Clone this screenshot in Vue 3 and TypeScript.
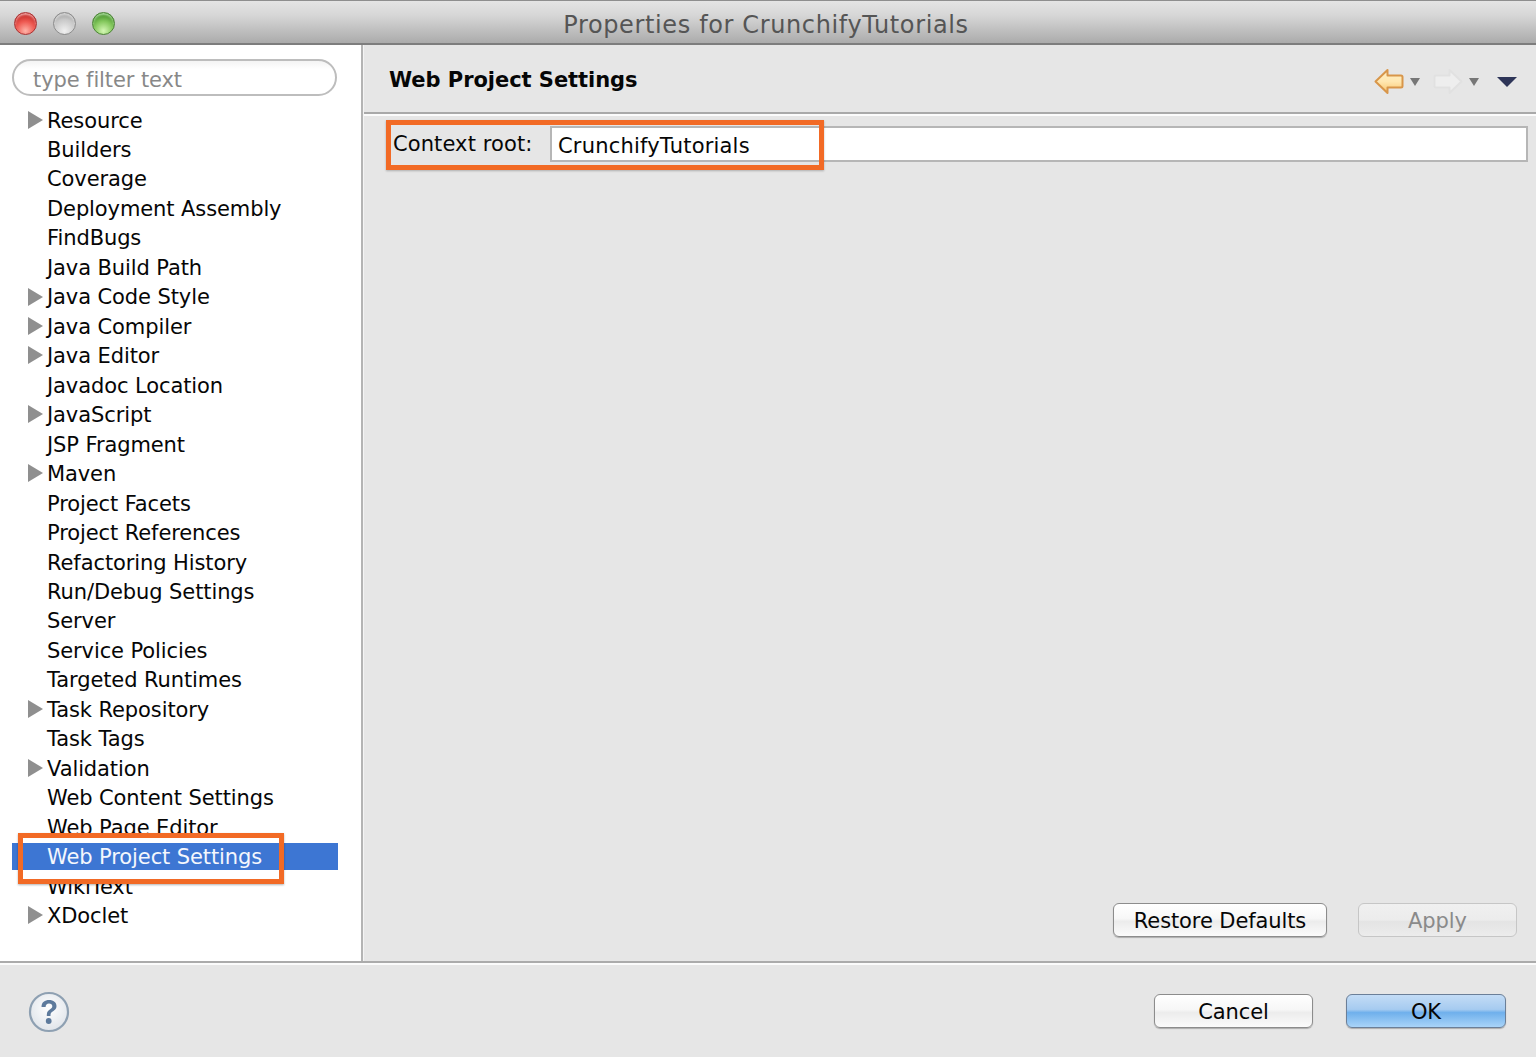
<script setup lang="ts">
interface Item { label: string; arrow?: boolean }
const items: Item[] = [
  { label: 'Resource', arrow: true }, { label: 'Builders' }, { label: 'Coverage' },
  { label: 'Deployment Assembly' }, { label: 'FindBugs' }, { label: 'Java Build Path' },
  { label: 'Java Code Style', arrow: true }, { label: 'Java Compiler', arrow: true },
  { label: 'Java Editor', arrow: true }, { label: 'Javadoc Location' },
  { label: 'JavaScript', arrow: true }, { label: 'JSP Fragment' }, { label: 'Maven', arrow: true },
  { label: 'Project Facets' }, { label: 'Project References' }, { label: 'Refactoring History' },
  { label: 'Run/Debug Settings' }, { label: 'Server' }, { label: 'Service Policies' },
  { label: 'Targeted Runtimes' }, { label: 'Task Repository', arrow: true }, { label: 'Task Tags' },
  { label: 'Validation', arrow: true }, { label: 'Web Content Settings' }, { label: 'Web Page Editor' },
  { label: 'Web Project Settings' }, { label: 'WikiText' }, { label: 'XDoclet', arrow: true }
]
const selected = 'Web Project Settings'
</script>

<template>
  <div class="window">
    <header class="titlebar">
      <div class="lights">
        <span class="light red"></span>
        <span class="light grey"></span>
        <span class="light green"></span>
      </div>
      <div class="title">Properties for CrunchifyTutorials</div>
    </header>

    <div class="main">
      <aside class="side">
        <div class="filter">type filter text</div>
        <ul class="tree">
          <li v-for="it in items" :key="it.label" class="row" :class="{ sel: it.label === selected }">
            <template v-if="it.label === selected">
              <span class="mask"></span>
              <span class="bar"></span>
              <span class="mark"></span>
            </template>
            <span class="twisty"><i v-if="it.arrow" class="tri"></i></span>
            <span class="lbl">{{ it.label }}</span>
          </li>
        </ul>
      </aside>

      <section class="content">
        <div class="head">
          <h1>Web Project Settings</h1>
          <div class="nav">
            <svg class="arr" width="30" height="27" viewBox="0 0 30 27">
              <defs>
                <linearGradient id="ag" x1="0" y1="0" x2="0" y2="1">
                  <stop offset="0" stop-color="#fff1c8" />
                  <stop offset=".5" stop-color="#ffe7b0" />
                  <stop offset="1" stop-color="#f8c56c" />
                </linearGradient>
              </defs>
              <path d="M1.500 13.500 L13.500 2 V7.500 H27 Q28.500 7.500 28.500 9 V18 Q28.500 19.500 27 19.500 H13.500 V25 Z" fill="url(#ag)" stroke="#d8964a" stroke-width="2" stroke-linejoin="round" />
            </svg>
            <i class="drop"></i>
            <svg class="arr fwd" width="30" height="27" viewBox="0 0 30 27">
              <path d="M28.500 13.500 L16.500 2 V7.500 H3 Q1.500 7.500 1.500 9 V18 Q1.500 19.500 3 19.500 H16.500 V25 Z" fill="#eeeeee" stroke="#e1e1e1" stroke-width="2" stroke-linejoin="round" />
            </svg>
            <i class="drop"></i>
            <i class="menu"></i>
          </div>
        </div>
        <div class="rule"></div>

        <div class="field">
          <label>Context root:</label>
          <div class="input">CrunchifyTutorials</div>
          <span class="mark2"></span>
        </div>

        <div class="spacer"></div>

        <div class="actions">
          <button class="btn restore">Restore Defaults</button>
          <button class="btn apply" disabled>Apply</button>
        </div>
      </section>
    </div>

    <footer class="foot">
      <svg class="help" width="44" height="44" viewBox="0 0 44 44">
        <defs>
          <radialGradient id="hg" cx=".5" cy=".4" r=".65">
            <stop offset="0" stop-color="#ffffff" />
            <stop offset="1" stop-color="#dde2e8" />
          </radialGradient>
        </defs>
        <circle cx="22" cy="22" r="19" fill="url(#hg)" stroke="#8ea0b2" stroke-width="2.200" />
        <path d="M14.500 17 C14.500 12 18 10 22 10 C26.500 10 29.500 12.500 29.500 16 C29.500 19.500 27 20.500 25 22 C23.500 23 23.500 24 23.500 26 H19.800 C19.800 23 20 21.500 22.500 19.800 C24.500 18.500 25.300 17.800 25.300 16.300 C25.300 14.700 24 13.600 22 13.600 C19.800 13.600 18.700 15 18.600 17 Z" fill="#5d7a9c" />
        <circle cx="21.700" cy="31" r="2.900" fill="#5d7a9c" />
      </svg>
      <div class="foot-btns">
        <button class="btn cancel">Cancel</button>
        <button class="btn ok">OK</button>
      </div>
    </footer>
  </div>
</template>

<style>
html, body { margin: 0; background: #e6e6e6; }
</style>

<style scoped>
.window {
  width: 1536px;
  height: 1057px;
  display: flex;
  flex-direction: column;
  overflow: hidden;
  background: #e6e6e6;
  font-family: "DejaVu Sans", "Liberation Sans", sans-serif;
  font-size: 21px;
  letter-spacing: -0.1px;
  color: #060606;
}
.titlebar {
  height: 45px;
  box-sizing: border-box;
  flex: none;
  position: relative;
  display: flex;
  align-items: center;
  justify-content: center;
  background: linear-gradient(#e4e4e4, #d6d6d6 35%, #ababab);
  border-top: 1px solid #8e8e8e;
  border-bottom: 2px solid #7d7d7d;
}
.lights {
  position: absolute;
  left: 14px;
  top: 11px;
  display: flex;
  gap: 16px;
}
.light {
  width: 23px;
  height: 23px;
  border-radius: 50%;
  box-sizing: border-box;
  border: 1px solid #777;
}
.red { background: radial-gradient(circle at 50% 85%, #ffb3a8, #ee5a52 45%, #c9302c 75%, #e88); border-color: #a33; box-shadow: inset 0 2px 2px rgba(255,220,220,.55); }
.grey { background: radial-gradient(circle at 50% 85%, #f0f0f0, #c8c8c8 55%, #a6a6a6 80%, #ccc); border-color: #8c8c8c; box-shadow: inset 0 2px 2px rgba(255,255,255,.5); }
.green { background: radial-gradient(circle at 50% 85%, #d5f7b5, #86c95f 45%, #4f9a33 75%, #8c8); border-color: #4c8436; box-shadow: inset 0 2px 2px rgba(225,255,215,.5); }
.title {
  font-size: 24px;
  color: #555;
  letter-spacing: 0.63px;
  margin-top: 5px;
  margin-left: -4px;
}
.main {
  flex: none;
  height: 916px;
  display: flex;
  border-bottom: 2px solid #ababab;
  box-sizing: content-box;
}
.side {
  width: 361px;
  flex: none;
  background: #fff;
  border-right: 2px solid #b4b4b4;
  box-sizing: content-box;
}
.filter {
  margin: 14px 0 0 12px;
  width: 325px;
  height: 37px;
  box-sizing: border-box;
  border: 2px solid #bdbdbd;
  border-radius: 19px;
  padding-left: 19px;
  line-height: 38px;
  color: #888;
  background: linear-gradient(#f4f4f4, #fff 25%);
}
.tree {
  list-style: none;
  margin: 10.5px 0 0;
  padding: 0;
}
.row {
  height: 29.48px;
  line-height: 29.48px;
  display: flex;
  align-items: center;
  white-space: nowrap;
  position: relative;
}
.twisty {
  width: 47px;
  height: 100%;
  flex: none;
  display: flex;
  align-items: center;
  padding-left: 28px;
  box-sizing: border-box;
}
.tri {
  width: 0;
  height: 0;
  border-left: 15px solid #8f8f8f;
  border-top: 9px solid transparent;
  border-bottom: 9px solid transparent;
  margin-top: -3px;
}
.lbl { position: relative; }
.row.sel { z-index: 2; }
.row.sel .lbl { color: #f4f7fd; }
.mask {
  position: absolute;
  left: 18px;
  width: 265px;
  top: -10px;
  height: 51px;
  background: #fff;
}
.bar {
  position: absolute;
  left: 12px;
  width: 326px;
  top: 0;
  height: 27px;
  background: #3d76d3;
}
.mark {
  position: absolute;
  left: 18px;
  width: 266px;
  top: -10px;
  height: 51px;
  box-sizing: border-box;
  border: 5px solid #f26a25;
  box-shadow: 0 1px 2px rgba(0,0,0,.3);
  z-index: 3;
}
.content {
  flex: 1;
  min-width: 0;
  display: flex;
  flex-direction: column;
  border-left: 1px solid #f4f4f4;
  background: #e6e6e6;
}
.head {
  height: 67px;
  flex: none;
  display: flex;
  align-items: center;
  justify-content: space-between;
  padding: 0 19px 0 25px;
}
.head h1 {
  margin: 3px 0 0;
  font-size: 21px;
  font-weight: 700;
  letter-spacing: -0.05px;
  color: #060606;
}
.nav {
  display: flex;
  align-items: center;
  margin-top: 5px;
}
.drop {
  width: 0;
  height: 0;
  border-top: 8px solid #777;
  border-left: 5px solid transparent;
  border-right: 5px solid transparent;
  margin: 2px 0 0 6px;
}
.fwd { margin-left: 13px; }
.menu {
  width: 0;
  height: 0;
  border-top: 10px solid #2e3558;
  border-left: 10px solid transparent;
  border-right: 10px solid transparent;
  margin: 2px 0 0 18px;
}
.rule {
  height: 2px;
  background: #a9a9a9;
  border-bottom: 2px solid #fbfbfb;
  flex: none;
}
.field {
  position: relative;
  margin: 10px 8px 0 29px;
  height: 36px;
  display: flex;
  align-items: center;
  flex: none;
}
.field label {
  width: 157px;
  flex: none;
  letter-spacing: 0.1px;
}
.input {
  flex: 1;
  height: 100%;
  box-sizing: border-box;
  background: #fff;
  border: 2px solid #b6b6b6;
  padding: 1px 0 0 6px;
  line-height: 34px;
  letter-spacing: 0.2px;
}
.mark2 {
  position: absolute;
  left: -7px;
  top: -6px;
  width: 438px;
  height: 50px;
  box-sizing: border-box;
  border: 5px solid #f26a25;
  box-shadow: 0 1px 2px rgba(0,0,0,.25);
}
.spacer { flex: 1; }
.actions {
  display: flex;
  justify-content: flex-end;
  gap: 31px;
  padding: 0 19px 24px 0;
}
.btn {
  font: inherit;
  letter-spacing: inherit;
  color: #060606;
  height: 34px;
  padding: 2px 0 0;
  box-sizing: border-box;
  border: 1px solid #8c8c8c;
  border-radius: 6px;
  background: linear-gradient(#fff, #f7f7f7 45%, #ececec 55%, #fbfbfb);
  box-shadow: 0 1px 1px rgba(0,0,0,.25);
}
.restore { width: 214px; }
.apply {
  width: 159px;
  color: #8a8a8a;
  border-color: #c6c6c6;
  background: linear-gradient(#f0f0f0, #ececec 50%, #e4e4e4 55%, #ececec);
  box-shadow: none;
}
.foot {
  flex: 1;
  display: flex;
  align-items: center;
  justify-content: space-between;
  padding: 0 30px 0 27px;
  background: #e6e6e6;
  border-top: 2px solid #fbfbfb;
}
.help { margin-top: 2px; }
.foot-btns {
  display: flex;
  gap: 33px;
}
.cancel { width: 159px; }
.ok {
  width: 160px;
  border-color: #6b7f98;
  background: linear-gradient(#c3dcf6, #a6cbf0 45%, #6fb0ec 55%, #a9d4f8);
}
</style>
